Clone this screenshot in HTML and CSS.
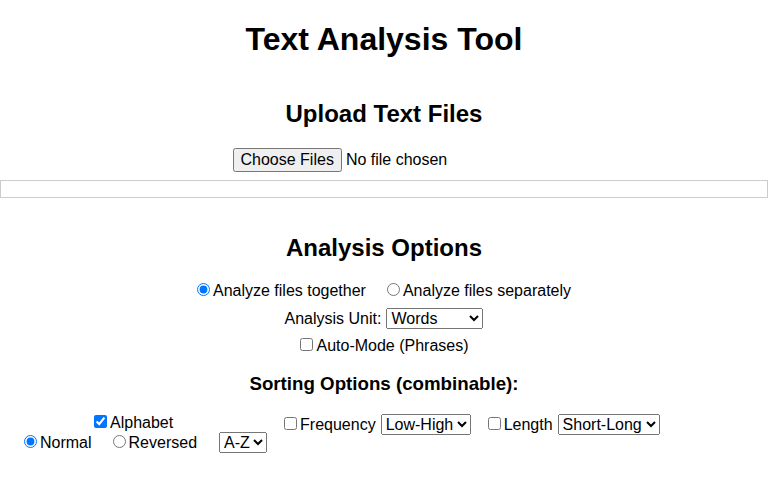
FILE: index.html
```html
<!DOCTYPE html>
<html lang="en">
<head>
<meta charset="utf-8">
<title>Text Analysis Tool</title>
<link rel="stylesheet" href="styles.css">
</head>
<body>
<h1 class="title">Text Analysis Tool</h1>

<section class="upload">
  <h2 class="section-title upload-title">Upload Text Files</h2>
  <div class="file-row"><input class="file-input" type="file" multiple accept=".txt"></div>
  <div class="file-list"></div>
</section>

<section class="options">
  <h2 class="section-title options-title">Analysis Options</h2>
  <div class="opt-row mode-row">
    <label class="opt-label"><input type="radio" name="mode" checked>Analyze files together</label>
    <label class="opt-label"><input type="radio" name="mode">Analyze files separately</label>
  </div>
  <div class="opt-row unit-row">
    <label class="unit-label">Analysis Unit:</label>
    <select class="unit-select">
      <option>Words</option>
      <option>Phrases</option>
      <option>Sentences</option>
    </select>
  </div>
  <div class="opt-row auto-row">
    <label><input type="checkbox">Auto-Mode (Phrases)</label>
  </div>

  <h3 class="sort-title">Sorting Options (combinable):</h3>
  <div class="sort-row">
    <div class="sort-group alpha-group">
      <label class="alpha-check"><input type="checkbox" checked>Alphabet</label>
      <div class="alpha-line">
        <label class="radio-label"><input type="radio" name="alpha" checked>Normal</label>
        <label class="radio-label"><input type="radio" name="alpha">Reversed</label>
        <select class="sort-select az-select"><option>A-Z</option><option>Z-A</option></select>
      </div>
    </div>
    <div class="sort-group plain-group">
      <label><input type="checkbox">Frequency</label>
      <select class="sort-select"><option>Low-High</option><option>High-Low</option></select>
    </div>
    <div class="sort-group plain-group">
      <label><input type="checkbox">Length</label>
      <select class="sort-select"><option>Short-Long</option><option>Long-Short</option></select>
    </div>
  </div>
</section>
</body>
</html>
```
FILE: styles.css
```css
html, body {
  margin: 0;
  padding: 0;
  background: #ffffff;
}

body {
  font-family: "Liberation Sans", Arial, sans-serif;
  font-size: 16px;
  color: #000000;
  text-align: center;
}

input, select, button {
  font-family: "Liberation Sans", Arial, sans-serif;
  font-size: 16px;
}

.title {
  font-size: 32px;
  font-weight: bold;
  margin: 21px 0 0;
}

.section-title {
  font-size: 24px;
  font-weight: bold;
  margin: 0 0 20px;
}

.upload-title {
  margin-top: 42px;
}

.file-row {
  height: 24px;
  display: flex;
  justify-content: center;
  align-items: center;
}

.file-list {
  margin-top: 8px;
  border: 1px solid #cccccc;
  height: 16px;
}

.options-title {
  margin-top: 36px;
  margin-bottom: 18px;
}

.opt-row {
  display: flex;
  justify-content: center;
  align-items: baseline;
  margin-bottom: 6px;
}

.mode-row {
  gap: 16px;
  padding-right: 5px;
  margin-bottom: 8px;
}

.unit-row {
  gap: 5px;
}

.unit-select {
  width: 97px;
}

.auto-row {
  padding-right: 3px;
}

.sort-title {
  font-size: 18.72px;
  font-weight: bold;
  margin: 18px 0 17px;
}

.sort-row {
  display: flex;
  align-items: flex-start;
  gap: 13px;
  padding-left: 19px;
  text-align: left;
}

.sort-group {
  display: flex;
  align-items: baseline;
  gap: 5px;
}

.plain-group {
  margin-top: 2px;
}

.alpha-group {
  flex-direction: column;
  align-items: flex-start;
  gap: 0;
}

.alpha-check {
  margin-left: 71px;
}

.alpha-line {
  display: flex;
  align-items: baseline;
}

.radio-label {
  margin-right: 16px;
}

.radio-label + .radio-label {
  margin-right: 22px;
}
```
